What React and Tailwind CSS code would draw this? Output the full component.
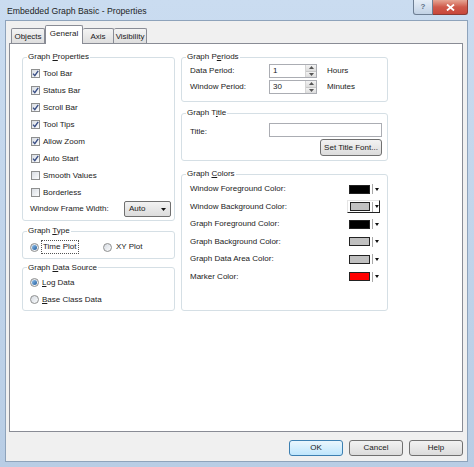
import React from "react";

const font = "font-['Liberation_Sans',Arial,sans-serif]";

const CheckBox = ({ checked }) => (
  <span className="w-[9px] h-[9px] shrink-0 border border-[#8e8f8f] bg-linear-to-br from-[#d9dde3] to-[#fbfcfd] flex items-center justify-center">
    {checked && (
      <svg width="7" height="7" viewBox="0 0 7 7">
        <path d="M1 3.6 L2.8 5.6 L6.2 0.8" stroke="#3a4f86" strokeWidth="1.4" fill="none" />
      </svg>
    )}
  </span>
);

const Radio = ({ checked }) => (
  <span className="w-[9px] h-[9px] shrink-0 rounded-full border border-[#8e8f8f] bg-linear-to-br from-[#d6dbe2] to-[#fafbfc] flex items-center justify-center">
    {checked && <span className="w-[5px] h-[5px] rounded-full bg-linear-to-br from-[#8fc2ee] to-[#1f5c9c]" />}
  </span>
);

const Group = ({ legend, className = "", children }) => (
  <fieldset className={`border border-[#d5dfe5] rounded-[3px] ${className}`}>
    <legend className="ml-[4px] px-[1px] text-[8px] leading-[10px]">{legend}</legend>
    {children}
  </fieldset>
);

const SpinInput = ({ value }) => (
  <div className="w-[48px] h-[14px] border border-[#abadb3] bg-white flex">
    <span className="flex-1 pl-[3px] text-[8px] leading-[12px]">{value}</span>
    <div className="w-[11px] flex flex-col border-l border-[#d5d5d5]">
      <span className="flex-1 flex items-center justify-center bg-linear-to-b from-[#f3f3f3] to-[#dcdcdc] border-b border-[#c8c8c8]">
        <svg width="5" height="3" viewBox="0 0 5 3"><path d="M0 3 L2.5 0 L5 3 Z" fill="#555" /></svg>
      </span>
      <span className="flex-1 flex items-center justify-center bg-linear-to-b from-[#f3f3f3] to-[#dcdcdc]">
        <svg width="5" height="3" viewBox="0 0 5 3"><path d="M0 0 L2.5 3 L5 0 Z" fill="#555" /></svg>
      </span>
    </div>
  </div>
);

const Swatch = ({ color, focused }) => (
  <div
    className={`w-[33px] h-[13px] flex items-center pl-[2px] ${
      focused ? "border-b border-r border-[#222] border-t border-l border-t-[#e5e5e5] border-l-[#e5e5e5]" : ""
    }`}
  >
    <span className="w-[21px] h-[9px] border border-[#222]" style={{ backgroundColor: color }} />
    <span className="ml-[2px] w-px h-[10px] bg-[#a8a8a8]" />
    <svg className="ml-[2px]" width="4" height="3" viewBox="0 0 4 3"><path d="M0 0 L2 3 L4 0 Z" fill="#111" /></svg>
  </div>
);

const Btn = ({ children, primary, className = "" }) => (
  <button
    className={`h-[16px] rounded-[3px] border text-[8px] leading-[14px] text-[#1a1a1a] ${
      primary
        ? "border-[#3c7fb1] bg-linear-to-b from-[#eaf6fd] to-[#bee6fd]"
        : "border-[#707070] bg-linear-to-b from-[#f2f2f2] to-[#dcdcdc]"
    } ${className}`}
  >
    {children}
  </button>
);

export default function App() {
  const checks = [
    ["Tool Bar", true],
    ["Status Bar", true],
    ["Scroll Bar", true],
    ["Tool Tips", true],
    ["Allow Zoom", true],
    ["Auto Start", true],
    ["Smooth Values", false],
    ["Borderless", false],
  ];
  const colors = [
    ["Window Foreground Color:", "#000000"],
    ["Window Background Color:", "#c0c0c0", true],
    ["Graph Foreground Color:", "#000000"],
    ["Graph Background Color:", "#c0c0c0"],
    ["Graph Data Area Color:", "#c0c0c0"],
    ["Marker Color:", "#ff0000"],
  ];

  return (
    <div className={`w-[474px] h-[467px] overflow-hidden bg-linear-to-b from-[#cadcf0] to-[#b8cde5] flex flex-col text-[#1a1a1a] ${font}`}>
      {/* title bar */}
      <div className="h-[20px] shrink-0 flex items-start pl-[7px]">
        <span className="pt-[6px] text-[8.7px] leading-[11px] text-[#1e1e1e]">Embedded Graph Basic - Properties</span>
        <div className="ml-auto mr-[6px] flex">
          <div className="w-[20px] h-[15px] border border-[#6d7e93] border-t-0 rounded-bl-[3px] bg-linear-to-b from-[#e6eef7] to-[#c2d2e5] flex items-center justify-center text-[8px] font-bold text-[#5d6f86]">
            ?
          </div>
          <div className="w-[35px] h-[15px] border border-[#8b3b34] border-t-0 border-l-0 rounded-br-[3px] bg-linear-to-b from-[#e5a594] via-[#cf5a4b] to-[#c8473b] flex items-center justify-center">
            <svg width="9" height="7" viewBox="0 0 9 7">
              <path d="M1 0.5 L8 6.5 M8 0.5 L1 6.5" stroke="#fff" strokeWidth="1.8" />
            </svg>
          </div>
        </div>
      </div>

      {/* client */}
      <div className="mx-[5px] mr-[6px] mb-[5px] flex-1 border border-[#8ea3bb] bg-[#f0f0f0] flex flex-col">
        <div className="ml-[3px] mr-[4px] pt-[4px] flex items-end h-[22px] pl-[2px]">
          <div className="w-[34px] h-[15px] border border-b-0 border-[#898c95] rounded-t-[2px] bg-linear-to-b from-[#f4f4f4] to-[#dedede] text-[8px] leading-[15px] text-center">Objects</div>
          <div className="relative z-10 -mb-px w-[38px] h-[19px] border border-b-0 border-[#898c95] rounded-t-[2px] bg-white text-[8px] leading-[15px] text-center">General</div>
          <div className="w-[31px] h-[15px] border border-b-0 border-l-0 border-[#898c95] rounded-t-[2px] bg-linear-to-b from-[#f4f4f4] to-[#dedede] text-[8px] leading-[15px] text-center">Axis</div>
          <div className="w-[33px] h-[15px] border border-b-0 border-l-0 border-[#898c95] rounded-t-[2px] bg-linear-to-b from-[#f4f4f4] to-[#dedede] text-[8px] leading-[15px] text-center">Visibility</div>
        </div>

        {/* panel */}
        <div className="ml-[3px] mr-[4px] h-[389px] border border-[#898c95] bg-white flex pl-[12px] pt-[8px] gap-[6px]">
          {/* left column */}
          <div className="w-[153px] flex flex-col">
            <Group legend={<>Graph <span className="underline">P</span>roperties</>} className="pt-[3px] pb-[3px]">
              {checks.map(([label, on]) => (
                <div key={label} className="h-[17px] pl-[8px] flex items-center gap-[3px] text-[8px]">
                  <CheckBox checked={on} />
                  <span>{label}</span>
                </div>
              ))}
              <div className="h-[16px] pl-[7px] pr-[3px] flex items-center justify-between text-[8px]">
                <span>Window Frame Width:</span>
                <div className="w-[47px] h-[16px] border border-[#707070] rounded-[2px] bg-linear-to-b from-[#f2f2f2] to-[#dcdcdc] flex items-center pl-[4px] pr-[4px]">
                  <span>Auto</span>
                  <svg className="ml-auto" width="5" height="3" viewBox="0 0 5 3"><path d="M0 0 L2.5 3 L5 0 Z" fill="#111" /></svg>
                </div>
              </div>
            </Group>

            <Group legend={<>Graph <span className="underline">T</span>ype</>} className="mt-[5px] pt-[2.5px] pb-[2px]">
              <div className="h-[17px] pl-[7px] flex items-center text-[8px]">
                <div className="w-[73px] flex items-center gap-[3px]">
                  <Radio checked />
                  <span className="outline outline-1 outline-dotted outline-[#555] px-[1px]">Time Plot</span>
                </div>
                <div className="flex items-center gap-[4px]">
                  <Radio />
                  <span>XY Plot</span>
                </div>
              </div>
            </Group>

            <Group legend={<>Graph <span className="underline">D</span>ata Source</>} className="mt-[4px] pt-[1.5px] pb-[2px]">
              <div className="h-[17px] pl-[7px] flex items-center gap-[3px] text-[8px]">
                <Radio checked />
                <span><span className="underline">L</span>og Data</span>
              </div>
              <div className="h-[17px] pl-[7px] flex items-center gap-[3px] text-[8px]">
                <Radio />
                <span><span className="underline">B</span>ase Class Data</span>
              </div>
            </Group>
          </div>

          {/* right column */}
          <div className="w-[207px] flex flex-col">
            <Group legend={<>Graph P<span className="underline">e</span>riods</>} className="pt-[1px] pb-[6px]">
              {[
                ["Data Period:", "1", "Hours"],
                ["Window Period:", "30", "Minutes"],
              ].map(([l, v, u]) => (
                <div key={l} className="h-[16px] pl-[8px] flex items-center text-[8px]">
                  <span className="w-[79px]">{l}</span>
                  <SpinInput value={v} />
                  <span className="ml-[10px]">{u}</span>
                </div>
              ))}
            </Group>

            <Group legend={<>Graph T<span className="underline">i</span>tle</>} className="mt-[6px] pt-[5px] pb-[4px] pr-[5px]">
              <div className="h-[14px] pl-[8px] flex items-center text-[8px]">
                <span className="w-[79px] pt-[3px]">Title:</span>
                <div className="w-[113px] h-[14px] border border-[#abadb3] bg-white" />
              </div>
              <div className="mt-[2px] flex justify-end">
                <Btn className="w-[62px] h-[17px]">Set Title Font...</Btn>
              </div>
            </Group>

            <Group legend={<>Graph <span className="underline">C</span>olors</>} className="mt-[8px] pt-[1.5px] pb-[24px] pr-[7px]">
              {colors.map(([l, c, f]) => (
                <div key={l} className="h-[17.5px] pl-[8px] flex items-center justify-between text-[8px]">
                  <span>{l}</span>
                  <Swatch color={c} focused={f} />
                </div>
              ))}
            </Group>
          </div>
        </div>

        {/* buttons */}
        <div className="mt-[8px] mr-[4px] flex justify-end gap-[6px]">
          <Btn primary className="w-[54px]">OK</Btn>
          <Btn className="w-[54px]">Cancel</Btn>
          <Btn className="w-[54px]">Help</Btn>
        </div>
      </div>
    </div>
  );
}
